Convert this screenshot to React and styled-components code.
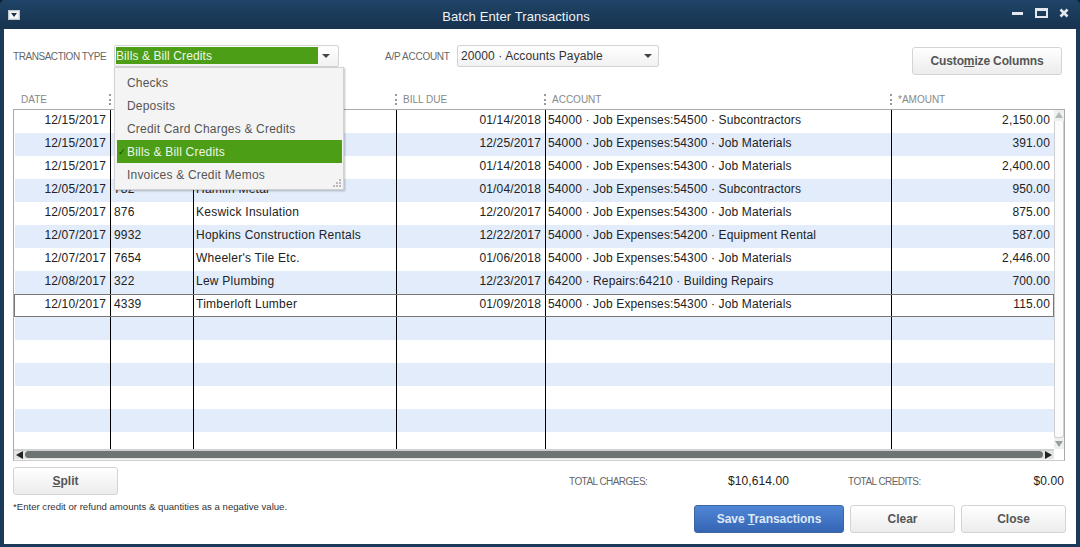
import React from "react";
import styled, { createGlobalStyle } from "styled-components";

const Global = createGlobalStyle`
  html, body { margin: 0; padding: 0; background: #0d2033; }
  body { font-family: "Liberation Sans", Arial, sans-serif; font-size: 12px; color: #222; }
  * { box-sizing: border-box; }
`;

const Win = styled.div`
  width: 1080px; height: 547px; display: flex; flex-direction: column;
  background: #1b3a59; border-radius: 5px 5px 0 0; overflow: hidden;
`;
const TitleBar = styled.div`
  height: 29px; flex: none; display: flex; align-items: center; padding: 0 11px 0 8px;
  background: linear-gradient(#1f4467, #16324e);
`;
const Title = styled.div`
  flex: 1; text-align: center; color: #f1f3f5; font-size: 13px; letter-spacing: 0.1px; padding-top: 3px;
`;
const Controls = styled.div`
  display: flex; align-items: center; gap: 11px; color: #e4e8ec; margin-bottom: 3px;
`;
const Body = styled.div`
  flex: 1; margin: 0 4px 3px; background: #fff; padding: 16px 11px 0 9px;
  display: flex; flex-direction: column;
`;
const Filters = styled.div`
  height: 45px; flex: none; display: flex; align-items: flex-start;
`;
const FieldLabel = styled.label`
  width: ${p => p.$w}px; margin-left: ${p => p.$ml || 0}px; height: 22px; line-height: 23px;
  font-size: 10px; letter-spacing: ${p => p.$ls}px; color: #666; white-space: nowrap; flex: none;
`;
const Select = styled.div`
  position: relative; flex: none; width: ${p => p.$w}px; height: 22px;
  margin-left: ${p => p.$ml || 0}px;
  border: 1px solid #d4d4d4; border-radius: 2px; padding: 1px;
  background: linear-gradient(#fff, #f1f1f1); display: flex; align-items: stretch;
`;
const SelectValue = styled.div`
  width: ${p => p.$w}px; line-height: 18px; height: 17px; padding-left: ${p => p.$pad || 0}px; font-size: 12px;
  letter-spacing: 0.1px;
  background: ${p => (p.$on ? "#4c9e17" : "transparent")};
  color: ${p => (p.$on ? "#eef7e6" : "#333")};
`;
const Caret = styled.i`
  position: absolute; right: ${p => p.$r}px; top: 8px; width: 0; height: 0;
  border: 4px solid transparent; border-top: 4px solid #444; border-bottom: 0;
`;
const Menu = styled.div`
  position: absolute; z-index: 5; left: -1px; top: 21px; width: 230px; height: 123px;
  background: #f4f4f4; border: 1px solid #d2d2d2; padding: 3px 1px 0 2px;
  box-shadow: 1px 1px 2px rgba(0,0,0,.25);
`;
const MenuItem = styled.div`
  position: relative; height: 23px; line-height: 25px; padding-left: 10px; font-size: 12px;
  letter-spacing: 0.2px;
  background: ${p => (p.$on ? "#4c9e17" : "transparent")};
  color: ${p => (p.$on ? "#eef7e6" : "#555")};
`;
const Tick = styled.span`
  position: absolute; left: 1px; top: 0; font-size: 9px; color: #1c3a08;
`;
const Grip = styled.svg`
  position: absolute; right: 1px; bottom: 1px;
`;
const Btn = styled.button`
  flex: none; width: ${p => p.$w}px; height: 28px; padding: 0; margin: ${p => p.$m || 0};
  font: bold 12px "Liberation Sans", Arial, sans-serif;
  letter-spacing: ${p => p.$ls || 0}px;
  color: ${p => (p.$primary ? "#dfe9f8" : "#555")};
  border: 1px solid ${p => (p.$primary ? "#3d659f" : "#d4d4d4")};
  border-radius: 3px;
  background: ${p => (p.$primary ? "linear-gradient(#4f86d6, #3565b4)" : "linear-gradient(#fff, #ececec)")};
`;
const HeadRow = styled.div`
  height: 19px; flex: none; display: grid; grid-template-columns: 97px 83px 203px 149px 346px 174px;
`;
const HeadCell = styled.div`
  position: relative; padding-left: ${p => (p.$first ? 8 : 7)}px; line-height: 19px; font-size: 10px; color: #888; white-space: nowrap;
`;
const Dots = styled.i`
  position: absolute; left: -1px; top: 4px; height: 11px; border-left: 2px dotted #999;
`;
const Table = styled.div`
  height: 352px; flex: none; border: 1px solid #aaa; border-bottom-color: #ccc;
  display: grid; grid-template-columns: 1040px 10px; grid-template-rows: 339px 11px;
`;
const Rows = styled.div`
  overflow: hidden; background: #fff;
`;
const Row = styled.div`
  height: 23px; display: grid; grid-template-columns: 96px 83px 203px 149px 346px 162px;
  position: relative; margin-left: 1px;
  background: ${p => (p.$alt ? "#e2ecfb" : "#fff")};
  ${p => p.$sel && `&::after{content:"";position:absolute;inset:0 0 0 -1px;border:1px solid #777;pointer-events:none;}`}
`;
const Cell = styled.div`
  border-right: ${p => (p.$last ? "0" : "1px solid #000")};
  line-height: 20px; white-space: nowrap; overflow: hidden; font-size: 12px; color: #222;
  letter-spacing: ${p => p.$ls || 0.15}px;
  text-align: ${p => (p.$right ? "right" : "left")};
  padding: ${p => (p.$right ? `0 ${p.$pad || 4}px 0 0` : `0 0 0 ${p.$pad || 3}px`)};
`;
const VScroll = styled.div`
  position: relative; background: #eef0f0;
`;
const VThumb = styled.div`
  position: absolute; left: 0; right: 0; top: 11px; bottom: 11px; background: #fbfbfb;
  border: 1px solid #d0d0d0; border-top: 0; border-radius: 0 0 3px 3px;
`;
const VArrow = styled.i`
  position: absolute; left: 1px; width: 0; height: 0; border: 4px solid transparent;
  ${p => p.$up
    ? "top: 2px; border-bottom: 6px solid #b4b8b8; border-top: 0;"
    : "bottom: 2px; border-top: 6px solid #9a9e9e; border-bottom: 0;"}
`;
const HScroll = styled.div`
  position: relative; background: #e4e5e5; border-top: 2px solid #d0d2d2; border-bottom: 1px solid #f4f4f4;
`;
const HThumb = styled.div`
  position: absolute; left: 11px; right: 11px; top: 0; height: 7px; background: #6e7373; border-radius: 4px;
`;
const HArrow = styled.i`
  position: absolute; top: 0; width: 0; height: 0; border: 4px solid transparent;
  ${p => p.$left
    ? "left: 2px; border-right: 7px solid #222; border-left: 0;"
    : "right: 2px; border-left: 7px solid #222; border-right: 0;"}
`;
const Corner = styled.div`background: #fff;`;
const Totals = styled.div`
  margin-top: 6px; height: 28px; flex: none; display: grid; align-items: center;
  grid-template-columns: 105px 451px 159px 120px 1fr;
`;
const TotalLabel = styled.div`font-size: 10px; letter-spacing: -0.55px; color: #666;`;
const TotalValue = styled.div`font-size: 12px; letter-spacing: 0.1px; color: #222; text-align: ${p => (p.$right ? "right" : "left")};`;
const CreditWrap = styled.div`display: flex; justify-content: space-between; padding-right: 1px; align-items: center;`;
const Bottom = styled.div`display: flex; align-items: flex-start;`;
const Note = styled.div`flex: 1; margin-top: 6px; font-size: 9.6px; line-height: 12px; color: #333;`;
const Actions = styled.div`display: flex; gap: 6px; margin: 10px -1px 0 0;`;

const data = [
  ["12/15/2017", "", "", "01/14/2018", "54000 · Job Expenses:54500 · Subcontractors", "2,150.00"],
  ["12/15/2017", "", "", "12/25/2017", "54000 · Job Expenses:54300 · Job Materials", "391.00"],
  ["12/15/2017", "", "", "01/14/2018", "54000 · Job Expenses:54300 · Job Materials", "2,400.00"],
  ["12/05/2017", "782", "Hamlin Metal", "01/04/2018", "54000 · Job Expenses:54500 · Subcontractors", "950.00"],
  ["12/05/2017", "876", "Keswick Insulation", "12/20/2017", "54000 · Job Expenses:54300 · Job Materials", "875.00"],
  ["12/07/2017", "9932", "Hopkins Construction Rentals", "12/22/2017", "54000 · Job Expenses:54200 · Equipment Rental", "587.00"],
  ["12/07/2017", "7654", "Wheeler's Tile Etc.", "01/06/2018", "54000 · Job Expenses:54300 · Job Materials", "2,446.00"],
  ["12/08/2017", "322", "Lew Plumbing", "12/23/2017", "64200 · Repairs:64210 · Building Repairs", "700.00"],
  ["12/10/2017", "4339", "Timberloft Lumber", "01/09/2018", "54000 · Job Expenses:54300 · Job Materials", "115.00"],
  ...Array.from({ length: 6 }, () => ["", "", "", "", "", ""]),
];
const heads = [["DATE", 0], ["", 1], ["", 0], ["BILL DUE", 1], ["ACCOUNT", 1], ["*AMOUNT", 1]];

export default function App() {
  return (
    <Win>
      <Global />
      <TitleBar>
        <svg width="12" height="10" viewBox="0 0 12 10">
          <rect x="0.5" y="0.5" width="11" height="9" fill="#e3e6e9" stroke="#c2c8ce" />
          <rect x="2" y="2" width="8" height="6" fill="#f6f7f8" />
          <path d="M3 3h6L6 7z" fill="#1c3046" />
        </svg>
        <Title>Batch Enter Transactions</Title>
        <Controls>
          <svg width="12" height="12" viewBox="0 0 12 12"><rect x="0" y="5" width="11" height="3" fill="currentColor" /></svg>
          <svg width="13" height="10" viewBox="0 0 13 10"><path d="M0 0h13v10H0z M2 3v5h9V3z" fill="currentColor" fillRule="evenodd" /></svg>
          <svg width="10" height="10" viewBox="0 0 10 10"><path d="M1.5 1.5l7 7M8.5 1.5l-7 7" stroke="currentColor" strokeWidth="2.6" /></svg>
        </Controls>
      </TitleBar>
      <Body>
        <Filters>
          <FieldLabel $w={101} $ls={-0.45}>TRANSACTION TYPE</FieldLabel>
          <Select $w={225}>
            <SelectValue $on $w={202}>Bills &amp; Bill Credits</SelectValue>
            <Caret $r={8} />
            <Menu>
              <MenuItem>Checks</MenuItem>
              <MenuItem>Deposits</MenuItem>
              <MenuItem>Credit Card Charges &amp; Credits</MenuItem>
              <MenuItem $on><Tick>✓</Tick>Bills &amp; Bill Credits</MenuItem>
              <MenuItem>Invoices &amp; Credit Memos</MenuItem>
              <Grip width="10" height="10" viewBox="0 0 10 10">
                <path d="M7 1h2v2H7zM4 4h2v2H4zM7 4h2v2H7zM1 7h2v2H1zM4 7h2v2H4zM7 7h2v2H7z" fill="#bbb" />
              </Grip>
            </Menu>
          </Select>
          <FieldLabel $w={72} $ml={46} $ls={-0.27}>A/P ACCOUNT</FieldLabel>
          <Select $w={202}>
            <SelectValue $w={180} $pad={2}>20000 · Accounts Payable</SelectValue>
            <Caret $r={6} />
          </Select>
          <Btn $w={150} $m="2px 3px 0 auto" $ls={-0.15}>Custo<u>m</u>ize Columns</Btn>
        </Filters>
        <HeadRow>
          {heads.map(([t, d], i) => (
            <HeadCell key={i} $first={i === 0}>{d ? <Dots /> : null}{t}</HeadCell>
          ))}
        </HeadRow>
        <Table>
          <Rows>
            {data.map((r, i) => (
              <Row key={i} $alt={i % 2 === 1} $sel={i === 8}>
                <Cell $right $pad={4}>{r[0]}</Cell>
                <Cell>{r[1]}</Cell>
                <Cell $pad={2} $ls={0.25}>{r[2]}</Cell>
                <Cell $right $pad={4}>{r[3]}</Cell>
                <Cell $pad={2} $ls={0.13}>{r[4]}</Cell>
                <Cell $right $last>{r[5]}</Cell>
              </Row>
            ))}
          </Rows>
          <VScroll>
            <VArrow $up />
            <VThumb />
            <VArrow />
          </VScroll>
          <HScroll>
            <HArrow $left />
            <HThumb />
            <HArrow />
          </HScroll>
          <Corner />
        </Table>
        <Totals>
          <Btn $w={105}><u>S</u>plit</Btn>
          <span />
          <TotalLabel>TOTAL CHARGES:</TotalLabel>
          <TotalValue>$10,614.00</TotalValue>
          <CreditWrap>
            <TotalLabel>TOTAL CREDITS:</TotalLabel>
            <TotalValue $right>$0.00</TotalValue>
          </CreditWrap>
        </Totals>
        <Bottom>
          <Note>*Enter credit or refund amounts &amp; quantities as a negative value.</Note>
          <Actions>
            <Btn $w={150} $primary $ls={-0.05}>Save <u>T</u>ransactions</Btn>
            <Btn $w={105}>Clear</Btn>
            <Btn $w={105}>Close</Btn>
          </Actions>
        </Bottom>
      </Body>
    </Win>
  );
}
